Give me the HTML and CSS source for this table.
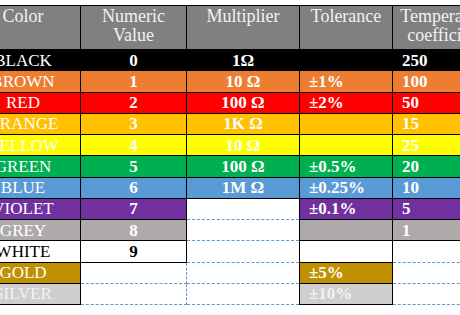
FILE: index.html
```html
<!DOCTYPE html>
<html>
<head>
<meta charset="utf-8">
<link rel="stylesheet" href="styles.css">
</head>
<body>
<table class="codes">
  <colgroup>
    <col class="c-color"><col class="c-num"><col class="c-mult"><col class="c-tol"><col class="c-temp">
  </colgroup>
  <thead>
    <tr class="head">
      <th>Color</th><th>Numeric<br>Value</th><th>Multiplier</th><th>Tolerance</th><th>Temperature<br>coefficient</th>
    </tr>
  </thead>
  <tbody>
    <tr class="black"><td class="name">BLACK</td><td class="v">0</td><td class="v">1Ω</td><td class="l"></td><td class="l">250</td></tr>
    <tr class="brown"><td class="name">BROWN</td><td class="v">1</td><td class="v">10 Ω</td><td class="l">±1%</td><td class="l">100</td></tr>
    <tr class="red"><td class="name">RED</td><td class="v">2</td><td class="v">100 Ω</td><td class="l">±2%</td><td class="l">50</td></tr>
    <tr class="orange"><td class="name">ORANGE</td><td class="v">3</td><td class="v">1K Ω</td><td class="l"></td><td class="l">15</td></tr>
    <tr class="yellow"><td class="name">YELLOW</td><td class="v">4</td><td class="v">10 Ω</td><td class="l"></td><td class="l">25</td></tr>
    <tr class="green"><td class="name">GREEN</td><td class="v">5</td><td class="v">100 Ω</td><td class="l">±0.5%</td><td class="l">20</td></tr>
    <tr class="blue"><td class="name">BLUE</td><td class="v">6</td><td class="v">1M Ω</td><td class="l">±0.25%</td><td class="l">10</td></tr>
    <tr class="violet"><td class="name">VIOLET</td><td class="v">7</td><td class="empty"></td><td class="l">±0.1%</td><td class="l">5</td></tr>
    <tr class="grey"><td class="name">GREY</td><td class="v">8</td><td class="empty"></td><td class="l"></td><td class="l">1</td></tr>
    <tr class="white"><td class="name">WHITE</td><td class="v">9</td><td class="empty"></td><td class="l"></td><td class="empty"></td></tr>
    <tr class="gold"><td class="name">GOLD</td><td class="empty"></td><td class="empty"></td><td class="l">±5%</td><td class="empty"></td></tr>
    <tr class="silver"><td class="name">SILVER</td><td class="empty"></td><td class="empty"></td><td class="l">±10%</td><td class="empty"></td></tr>
  </tbody>
</table>
</body>
</html>
```
FILE: styles.css
```css
html, body {
  margin: 0;
  padding: 0;
  background: #ffffff;
  overflow: hidden;
}

body {
  width: 460px;
  height: 315px;
  font-family: "Liberation Serif", "Times New Roman", serif;
}

.codes {
  border-collapse: collapse;
  table-layout: fixed;
  width: 533px;
  margin: 5px 0 0 -35px;
  color: #ffffff;
}

.c-color { width: 115px; }
.c-num { width: 106px; }
.c-mult { width: 113px; }
.c-tol { width: 93px; }
.c-temp { width: 106px; }

.codes th,
.codes td {
  border: 1px solid #000000;
  padding: 0;
}

.head {
  height: 44px;
}

.head th {
  background: #808080;
  color: #f2f2f2;
  font-weight: normal;
  font-size: 18px;
  line-height: 19px;
  vertical-align: top;
  text-align: center;
  padding-top: 1px;
  white-space: nowrap;
}

.codes tbody tr {
  height: 21.25px;
}

.codes td {
  font-size: 17px;
  line-height: 19px;
  vertical-align: middle;
  white-space: nowrap;
  font-weight: bold;
}

.codes td.name {
  text-align: center;
  font-weight: normal;
}

.codes td.v {
  text-align: center;
}

.codes td.l {
  text-align: left;
  padding-left: 9px;
}

.codes td.empty {
  background: #ffffff;
  border: 1px dashed #5b9bd5;
}

.black td { background: #000000; }
.brown td { background: #ed7d31; }
.red td { background: #ff0000; }
.orange td { background: #ffc000; }
.yellow td { background: #ffff00; }
.green td { background: #00b050; }
.blue td { background: #5b9bd5; }
.violet td { background: #7030a0; }
.grey td { background: #aeaaaa; }
.white td { background: #ffffff; color: #000000; }
.gold td { background: #bf9000; }
.silver td { background: #d0cece; color: #f2f2f2; }
```
